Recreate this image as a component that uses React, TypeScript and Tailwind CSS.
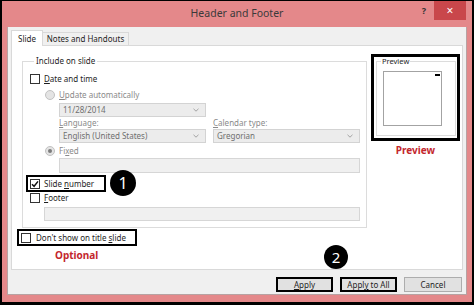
import React from "react";

function U({ children }: { children: React.ReactNode }) {
  return <span className="underline underline-offset-[1px] decoration-[0.8px]">{children}</span>;
}

function Checkbox({ checked }: { checked?: boolean }) {
  return (
    <span className="w-[10px] h-[10px] border border-[#333333] bg-white flex items-center justify-center shrink-0">
      {checked && (
        <svg width="8" height="8" viewBox="0 0 8 8">
          <path d="M1 4.2 L3.1 6.3 L7 1.4" stroke="#111111" strokeWidth="1.5" fill="none" />
        </svg>
      )}
    </span>
  );
}

function Radio({ checked }: { checked?: boolean }) {
  return (
    <span className="w-[10px] h-[10px] rounded-full border border-[#c2c2c2] bg-[#e4e4e4] flex items-center justify-center shrink-0">
      {checked && <span className="w-[4px] h-[4px] rounded-full bg-[#7d7d7d]" />}
    </span>
  );
}

function Chevron() {
  return (
    <svg width="6" height="4" viewBox="0 0 6 4" className="shrink-0">
      <path d="M0.5 0.8 L3 3.2 L5.5 0.8" stroke="#9a9a9a" strokeWidth="0.9" fill="none" />
    </svg>
  );
}

function Select({ text }: { text: string }) {
  return (
    <div className="w-[147px] h-[14px] border border-[#d3d3d3] bg-[#ececec] flex items-center pl-[3px] pr-[6px] text-[#6f6f6f]">
      <span className="flex-1 leading-none">{text}</span>
      <Chevron />
    </div>
  );
}

export default function App() {
  return (
    <div className="w-[474px] h-[305px] bg-black pt-[1px] px-[2px] pb-[3px] font-['Noto_Sans','Open_Sans',sans-serif] text-[8px] text-[#1e1e1e] overflow-hidden">
      <div className="h-full bg-[#e4888a] flex flex-col px-[5px] pb-[7px]">
        {/* Title bar */}
        <div className="h-[26px] grid grid-cols-[1fr_auto_1fr] shrink-0">
          <div />
          <div className="pt-[5px] text-[10.5px] text-[#3a3a3a] leading-[14px]">Header and Footer</div>
          <div className="flex justify-end items-start">
            <span className="mt-[4px] mr-[8px] text-[9px] font-bold text-[#333333] leading-[12px]">?</span>
            <div className="w-[32px] h-[19px] bg-[#c9474b] flex items-center justify-center text-white text-[12px] leading-none mr-[1px]">
              ×
            </div>
          </div>
        </div>

        {/* Body */}
        <div className="relative flex-1 flex flex-col bg-[#f0f0f0] border-x border-b border-[#b7a2a2] px-[3px]">
          {/* Tabs */}
          <div className="flex items-end pt-[3px] relative z-10 shrink-0">
            <div className="w-[32px] h-[16px] -mb-[1px] bg-white border-x border-t border-[#d9d9d9] flex items-center justify-center leading-none">
              Slide
            </div>
            <div className="w-[86px] h-[13px] bg-[#f0f0f0] border-r border-t border-[#d9d9d9] flex items-center justify-center leading-none">
              Notes and Handouts
            </div>
          </div>

          {/* Panel */}
          <div className="flex-1 bg-white border border-[#d9d9d9] flex">
            {/* Left column */}
            <div className="w-[355px] flex flex-col">
              <fieldset className="ml-[10px] mt-[9px] w-[345px] border border-[#dcdcdc] pl-[7px] pb-[6px] flex flex-col">
                <legend className="ml-[4px] px-[2px] leading-[12px]">Include on slide</legend>

                <div className="mt-[6px] h-[12px] flex items-center gap-[4px]">
                  <Checkbox />
                  <span className="leading-none"><U>D</U>ate and time</span>
                </div>

                <div className="mt-[4px] h-[12px] ml-[15px] flex items-center gap-[4px] text-[#8a8a8a]">
                  <Radio />
                  <span className="leading-none"><U>U</U>pdate automatically</span>
                </div>

                <div className="mt-[2px] ml-[29px]">
                  <Select text="11/28/2014" />
                </div>

                <div className="ml-[29px] h-[12px] flex items-center text-[#8a8a8a] leading-none">
                  <span className="w-[154px]"><U>L</U>anguage:</span>
                  <span><U>C</U>alendar type:</span>
                </div>

                <div className="ml-[29px] flex gap-[7px]">
                  <Select text="English (United States)" />
                  <Select text="Gregorian" />
                </div>

                <div className="mt-[2px] h-[12px] ml-[15px] flex items-center gap-[4px] text-[#8a8a8a]">
                  <Radio checked />
                  <span className="leading-none">Fi<U>x</U>ed</span>
                </div>

                <div className="mt-[1px] ml-[29px] w-[301px] h-[15px] border border-[#d6d6d6] bg-[#f0f0f0]" />

                <div className="relative mt-[2px] -ml-[4px] w-[80px] h-[17px] border-2 border-black pl-[2px] flex items-center gap-[4px]">
                  <Checkbox checked />
                  <span className="leading-none">Slide <U>n</U>umber</span>
                  <div className="absolute left-[82px] -top-[7px] w-[26px] h-[26px] rounded-full bg-black text-white text-[16px] flex items-center justify-center leading-none">
                    1
                  </div>
                </div>

                <div className="h-[12px] flex items-center gap-[4px]">
                  <Checkbox />
                  <span className="leading-none"><U>F</U>ooter</span>
                </div>

                <div className="mt-[3px] ml-[14px] w-[316px] h-[14px] border border-[#d6d6d6] bg-[#f0f0f0]" />
              </fieldset>

              <div className="mt-[1px] ml-[5px] w-[120px] h-[17px] border-2 border-black pl-[2px] flex items-center gap-[5px]">
                <Checkbox />
                <span className="leading-none">Don't show on title <U>s</U>lide</span>
              </div>

              <div className="mt-[3px] ml-[43px] text-[10px] font-bold text-[#c3272d] leading-[12px]">Optional</div>
            </div>

            {/* Right column */}
            <div className="ml-[4px] flex flex-col items-center w-[89px]">
              <div className="mt-[8px] w-[89px] h-[87px] border-[3px] border-black bg-white flex flex-col">
                <fieldset className="ml-[2px] mr-[1px] -mt-[1px] h-[80px] border border-[#dcdcdc] flex flex-col">
                  <legend className="ml-[4px] px-[1px] text-[7.5px] leading-[10px]">Preview</legend>
                  <div className="mt-[5px] ml-[6px] w-[59px] h-[55px] border border-[#a3a3a3] flex justify-end items-start pt-[2px] pr-[1px]">
                    <span className="w-[5px] h-[2px] bg-black" />
                  </div>
                </fieldset>
              </div>
              <div className="mt-[3px] text-[10px] font-bold text-[#c3272d] leading-[12px]">Preview</div>
            </div>
          </div>

          {/* Buttons row */}
          <div className="h-[24px] shrink-0 flex justify-end items-start pt-[7px] pr-[1px] gap-[7px]">
            <div className="w-[57px] h-[15px] border-2 border-black bg-[#e1e1e1] flex items-center justify-center leading-none">
              <span><U>A</U>pply</span>
            </div>
            <div className="w-[57px] h-[15px] border-2 border-black bg-[#e1e1e1] flex items-center justify-center leading-none">
              <span>Appl<U>y</U> to All</span>
            </div>
            <div className="w-[58px] h-[15px] border border-[#adadad] bg-[#e1e1e1] flex items-center justify-center leading-none">
              <span>Cancel</span>
            </div>
          </div>

          <div className="absolute left-[316px] top-[218px] w-[24px] h-[24px] rounded-full bg-black text-white text-[15px] flex items-center justify-center leading-none">
            2
          </div>
        </div>
      </div>
    </div>
  );
}
